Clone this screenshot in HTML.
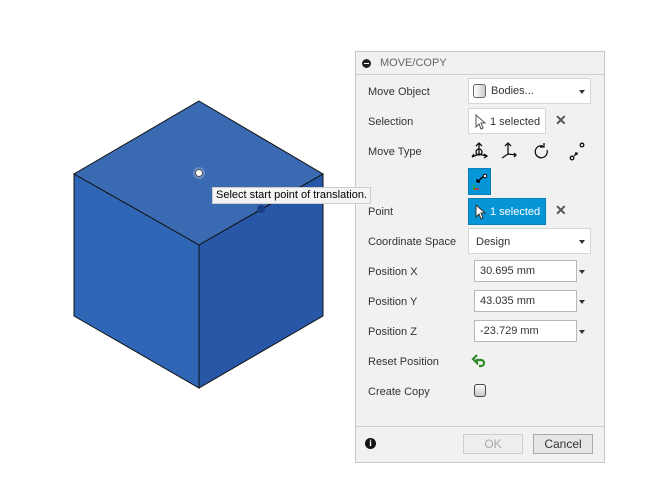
<!DOCTYPE html>
<html><head><style>
*{margin:0;padding:0;box-sizing:border-box}
body{width:653px;height:485px;background:#fff;position:relative;overflow:hidden;font-family:"Liberation Sans",Arial,sans-serif;font-size:11px;color:#333}
.a{position:absolute}
.panel{left:355px;top:51px;width:250px;height:412px;background:#f1f1f1;border:1px solid #c8c8c8}
.lbl{position:absolute;left:12px;font-size:11px;color:#333}
.box{position:absolute;background:#fff;border:1px solid #d6d6d6}
.inp{position:absolute;background:#fff;border:1px solid #b8b8b8;font-size:11px;padding:4px 0 0 5px;height:22px;width:103px;left:118px}
.arr{position:absolute;width:0;height:0;border-left:3px solid transparent;border-right:3px solid transparent;border-top:4px solid #333}
</style></head><body>
<svg class="a" style="left:0;top:0" width="653" height="485">
<polygon points="199,101 323,174 199,245 74,174" fill="#3a6ab2" stroke="#111" stroke-width="1"/>
<polygon points="74,174 199,245 199,388 74,316" fill="#2f66b5" stroke="#111" stroke-width="1"/>
<polygon points="199,245 323,174 323,316 199,388" fill="#2757a6" stroke="#111" stroke-width="1"/>
<circle cx="199" cy="173" r="6" fill="#7fa3d8" opacity=".6"/>
<circle cx="199" cy="173" r="3.5" fill="#fff" stroke="#555" stroke-width="1"/>
<circle cx="261" cy="209" r="4" fill="#163f86"/>
</svg>
<div class="a panel">
 <div class="a" style="left:0;top:0;width:248px;height:23px;border-bottom:1px solid #d0d0d0"></div>
 <div class="a" style="left:6px;top:7px;width:9px;height:9px;border-radius:50%;background:#222"><div class="a" style="left:2px;top:4px;width:5px;height:1px;background:#fff"></div></div>
 <div class="a" style="left:24px;top:5px;color:#666;font-size:11px">MOVE/COPY</div>
 <div class="lbl" style="top:34px">Move Object</div>
 <div class="box" style="left:112px;top:26px;width:123px;height:26px"><div class="a" style="left:4px;top:5px;width:13px;height:14px;border:1px solid #666;border-radius:3px;background:linear-gradient(90deg,#fff,#ccc)"></div><div class="a" style="left:22px;top:6px">Bodies...</div><div class="arr" style="left:110px;top:11px"></div></div>
 <div class="lbl" style="top:64px">Selection</div>
 <div class="box" style="left:112px;top:56px;width:78px;height:26px"><svg class="a" style="left:6px;top:5px" width="12" height="16"><path d="M1 1v12l3-3 2 5 2-1-2-5h4z" fill="#fff" stroke="#555"/></svg><div class="a" style="left:21px;top:7px">1 selected</div></div>
 <div class="a" style="left:199px;top:60px;font-size:14px;color:#555;font-weight:bold">✕</div>
 <div class="lbl" style="top:94px">Move Type</div>
 <svg class="a" style="left:112px;top:88px" width="130" height="22" stroke="#111" fill="none" stroke-width="1.3">
  <path d="M11 3v12M8 6l3-3 3 3M4 17l7-3 7 2M16 14l3 2-3 2M4 17l2-3"/><circle cx="11" cy="12" r="3"/>
  <path d="M40 3v12M37 6l3-3 3 3M34 18l6-4 8 1M46 13l2 2-2 2"/>
  <path d="M75 6a6 6 0 1 0 4 4M76 3v4h-4"/>
  <circle cx="104" cy="18" r="1.8"/><circle cx="114" cy="5" r="1.8"/><path d="M106 16l3-3M107 13h2v2"/>
 </svg>
 <div class="a" style="left:112px;top:116px;width:23px;height:27px;background:#0696d7;border:1px solid #0a7fbc"></div>
 <svg class="a" style="left:112px;top:116px" width="23" height="27"><path d="M9 14l7-6M9 14v-3M9 14h3" stroke="#000" stroke-width="1.4" fill="none"/><circle cx="17" cy="8" r="1.8" fill="#fff" stroke="#000"/><path d="M5 21h6" stroke="#d22" stroke-width="1.5"/><path d="M6 22v-5" stroke="#2a2" stroke-width="1.5"/></svg>
 <div class="lbl" style="top:154px">Point</div>
 <div class="a" style="left:112px;top:146px;width:78px;height:27px;background:#0696d7;border:1px solid #0a7fbc;color:#fff"><svg class="a" style="left:6px;top:5px" width="12" height="16"><path d="M1 1v12l3-3 2 5 2-1-2-5h4z" fill="#fff" stroke="#333"/></svg><div class="a" style="left:21px;top:7px">1 selected</div></div>
 <div class="a" style="left:199px;top:150px;font-size:14px;color:#555;font-weight:bold">✕</div>
 <div class="lbl" style="top:184px">Coordinate Space</div>
 <div class="box" style="left:112px;top:176px;width:123px;height:26px"><div class="a" style="left:7px;top:7px">Design</div><div class="arr" style="left:110px;top:11px"></div></div>
 <div class="lbl" style="top:214px">Position X</div>
 <div class="inp" style="top:208px">30.695 mm</div><div class="arr" style="left:223px;top:218px"></div>
 <div class="lbl" style="top:244px">Position Y</div>
 <div class="inp" style="top:238px">43.035 mm</div><div class="arr" style="left:223px;top:248px"></div>
 <div class="lbl" style="top:274px">Position Z</div>
 <div class="inp" style="top:268px">-23.729 mm</div><div class="arr" style="left:223px;top:278px"></div>
 <div class="lbl" style="top:304px">Reset Position</div>
 <svg class="a" style="left:115px;top:300px" width="18" height="16"><path d="M6 3L2 7l4 4V8h4a3 3 0 0 1 0 6H8" fill="none" stroke="#2f8a2a" stroke-width="2.2"/></svg>
 <div class="lbl" style="top:334px">Create Copy</div>
 <div class="a" style="left:118px;top:332px;width:12px;height:13px;border:1px solid #444;border-radius:3px;background:linear-gradient(#fafafa,#ccc)"></div>
 <div class="a" style="left:0;top:374px;width:248px;height:1px;background:#d0d0d0"></div>
 <div class="a" style="left:9px;top:386px;width:11px;height:11px;border-radius:50%;background:#111;color:#fff;font-size:9px;font-weight:bold;text-align:center;line-height:11px;font-family:'Liberation Serif',serif">i</div>
 <div class="a" style="left:107px;top:382px;width:60px;height:20px;border:1px solid #ccc;background:#eee;color:#aaa;text-align:center;line-height:18px;font-size:12px">OK</div>
 <div class="a" style="left:177px;top:382px;width:60px;height:20px;border:1px solid #aaa;background:#e6e6e6;color:#333;text-align:center;line-height:18px;font-size:12px">Cancel</div>
</div>
<div class="a" style="left:212px;top:187px;width:159px;height:17px;background:#f4f4f4;border:1px solid #ccc;font-size:11px;color:#000;padding:1px 0 0 3px;white-space:nowrap">Select start point of translation.</div>
</body></html>
